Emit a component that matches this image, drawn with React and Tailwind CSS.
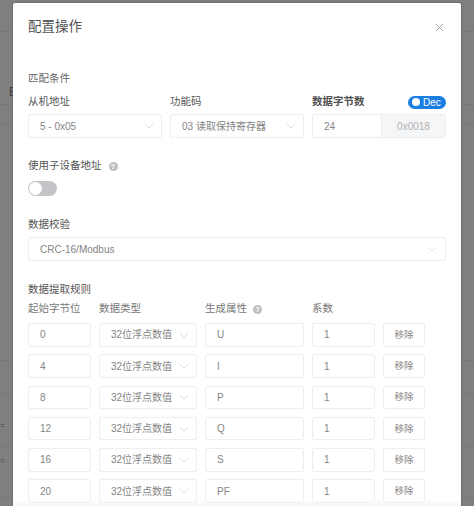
const F = '[font-family:"Liberation_Sans","Noto_Sans_CJK_SC",sans-serif]';

function Chevron({ className = "" }) {
  return (
    <svg viewBox="0 0 12 12" className={`w-[10px] h-[10px] ${className}`} fill="none" stroke="#cfd2d6" strokeWidth="0.9">
      <path d="M1 3.8 L6 8.4 L11 3.8" />
    </svg>
  );
}

function Help() {
  return (
    <span className="inline-flex items-center justify-center w-[9px] h-[9px] rounded-full bg-[#bdbfc2] text-white text-[7px] leading-none font-bold">?</span>
  );
}

const field = "bg-white border border-[#eceef0] rounded-[3px] flex items-center text-[#858585] shadow-[0_0_1px_#f0f1f3]";

function Select({ value, className = "h-[24px]" }) {
  return (
    <div className={`${field} text-[10px] pl-[11px] pr-[7px] justify-between ${className}`}>
      <span className="whitespace-nowrap">{value}</span>
      <Chevron />
    </div>
  );
}

function Input({ value, className = "h-[24px]" }) {
  return <div className={`${field} text-[10px] px-[11px] ${className}`}>{value}</div>;
}

const rows = [["0", "U"], ["4", "I"], ["8", "P"], ["12", "Q"], ["16", "S"], ["20", "PF"]];

export default function App() {
  return (
    <div className={`relative w-[474px] h-[506px] overflow-hidden bg-[#7f7f7f] ${F}`}>
      <div className="absolute inset-0 flex flex-col">
        <div className="h-[32px] border-b border-[#787878]" />
        <div className="h-[73px] border-b border-[#787878] flex items-end pl-[9px] text-[12px] text-[#3a3a3a]"><span className="mb-[3px]">E</span></div>
        <div className="h-[19px] border-b border-[#787878]" />
        <div className="h-[237px] border-b border-[#787878]" />
        <div className="h-[33px] border-b border-[#787878]" />
        <div className="h-[53px] border-b border-[#787878] flex items-end text-[8px] text-[#4a4a4a]"><span className="mb-[14px]">=</span></div>
        <div className="h-[51px] border-b border-[#787878] flex items-end text-[8px] text-[#4a4a4a]"><span className="mb-[30px]">=</span></div>
      </div>
      <div className="absolute left-[13px] top-[3px] w-[448px] h-[520px] bg-white rounded-t-[2px] px-[15px] shadow-[0_0_2px_#555555]">
        <div className="flex items-center justify-between h-[48px]">
          <span className="text-[13.5px] text-[#505050]">配置操作</span>
          <svg viewBox="0 0 10 10" className="w-[9px] h-[9px] mr-[2px]" stroke="#8f8f8f" strokeWidth="0.9" fill="none">
            <path d="M1 1 L9 9 M9 1 L1 9" />
          </svg>
        </div>
        <div className="mt-[19px] text-[10.5px] leading-[16px] text-[#666666]">匹配条件</div>
        <div className="mt-[7px] grid grid-cols-[134px_134px_134px] gap-x-[8px]">
          <div>
            <div className="h-[18px] mb-[3px] flex items-center text-[10.5px] text-[#555555]">从机地址</div>
            <Select value="5 - 0x05" />
          </div>
          <div>
            <div className="h-[18px] mb-[3px] flex items-center text-[10.5px] text-[#555555]">功能码</div>
            <Select value="03 读取保持寄存器" />
          </div>
          <div>
            <div className="h-[18px] mb-[3px] flex items-center justify-between">
              <span className="text-[10.5px] font-bold text-[#505050]">数据字节数</span>
              <span className="h-[13px] w-[38px] rounded-full bg-[#1a7fe0] flex items-center pl-[4px] gap-[3px] text-white text-[10px]">
                <span className="w-[8px] h-[8px] rounded-full bg-white" />Dec
              </span>
            </div>
            <div className="flex">
              <div className={`${field} h-[24px] text-[10px] w-[70px] px-[11px] rounded-r-none`}>24</div>
              <div className="h-[24px] text-[10px] flex flex-1 items-center justify-center border border-l-0 border-[#eceef0] rounded-r-[3px] bg-[#f5f6f7] text-[#b0b2b5]">0x0018</div>
            </div>
          </div>
        </div>
        <div className="mt-[20px] h-[16px] flex items-center gap-[7px] text-[10.5px] text-[#555555]">使用子设备地址 <Help /></div>
        <div className="mt-[7px] w-[29px] h-[15px] rounded-full bg-[#c3c4c7] flex items-center pl-[1px]">
          <span className="w-[13px] h-[13px] rounded-full bg-white" />
        </div>
        <div className="mt-[21px] h-[16px] flex items-center text-[10.5px] text-[#555555]">数据校验</div>
        <Select value="CRC-16/Modbus" className="h-[24px] mt-[4px] w-[418px] pr-[8px]" />
        <div className="mt-[21px] h-[16px] flex items-center text-[10.5px] text-[#555555]">数据提取规则</div>
        <div className="mt-[2px] grid grid-cols-[63px_98px_99px_63px_42px] gap-x-[8px] h-[18px] items-center text-[10.5px] text-[#777777]">
          <span>起始字节位</span>
          <span>数据类型</span>
          <span className="flex items-center gap-[6px]">生成属性 <Help /></span>
          <span>系数</span>
        </div>
        <div className="mt-[5px] flex flex-col gap-[7.8px]">
          {rows.map(([a, b]) => (
            <div key={a} className="grid grid-cols-[63px_98px_99px_63px_42px] gap-x-[8px]">
              <Input value={a} className="h-[23.5px]" />
              <Select value="32位浮点数值" className="h-[23.5px]" />
              <Input value={b} className="h-[23.5px]" />
              <Input value="1" className="h-[23.5px]" />
              <div className={`${field} h-[23.5px] justify-center text-[9.5px]`}>移除</div>
            </div>
          ))}
        </div>
      </div>
      <div className="absolute left-[13px] bottom-0 w-[448px] h-[6px] bg-gradient-to-b from-transparent to-[#f5f5f5]" />
    </div>
  );
}
